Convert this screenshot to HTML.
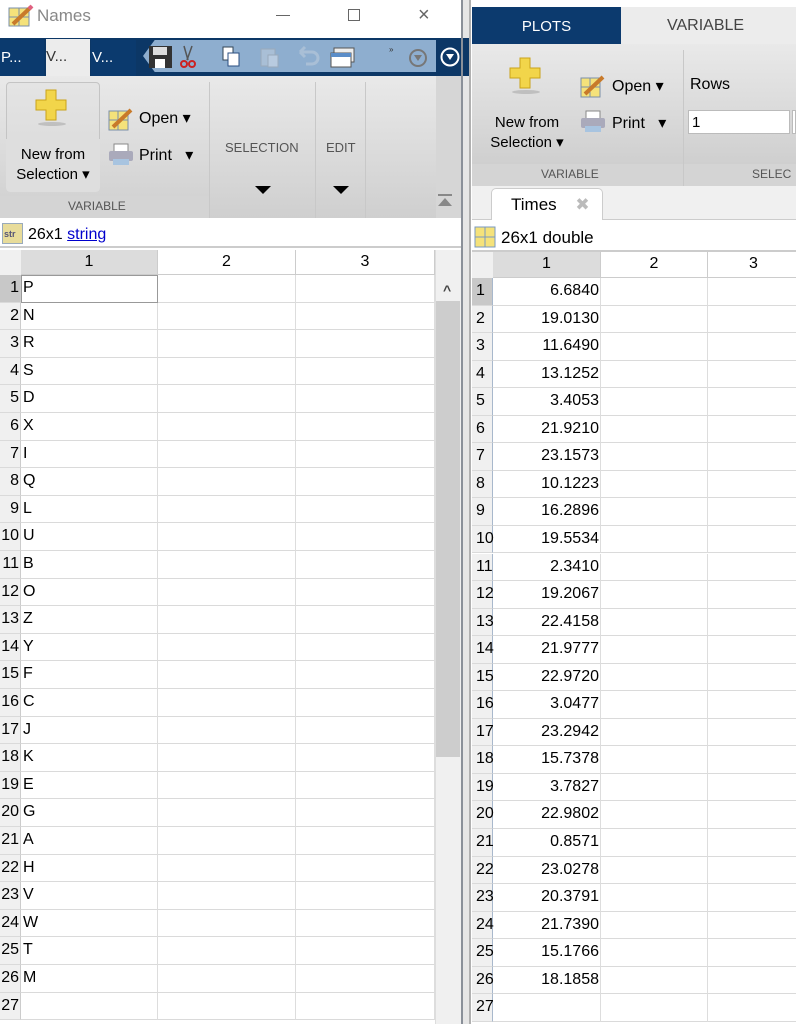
<!DOCTYPE html>
<html><head><meta charset="utf-8">
<style>
*{box-sizing:border-box;margin:0;padding:0}
body{width:796px;height:1024px;overflow:hidden;background:#fff;font-family:"Liberation Sans",sans-serif;position:relative;color:#000}
.abs{position:absolute}
.rib{background:linear-gradient(#e9e9e9,#cfcfcf)}
.lbl{font-size:12px;color:#555;position:absolute}
.gridcell{position:absolute;border-right:1px solid #ddd;border-bottom:1px solid #e3e3e3;font-size:16px}
</style></head><body>
<!-- LEFT WINDOW -->
<div class="abs" style="left:0;top:0;width:462px;height:38px;background:#fff"></div>
<svg class="abs" style="left:8px;top:4px" width="26" height="24"><rect x="1" y="4" width="20" height="18" fill="#f5e27a" stroke="#7a8fa8"/><line x1="11" y1="4" x2="11" y2="22" stroke="#7a8fa8"/><line x1="1" y1="13" x2="21" y2="13" stroke="#7a8fa8"/><line x1="5" y1="20" x2="23" y2="3" stroke="#c87a2a" stroke-width="4"/><line x1="21" y1="5" x2="24" y2="2" stroke="#e06080" stroke-width="4"/></svg>
<div class="abs" style="left:37px;top:6px;font-size:17px;color:#888">Names</div>
<div class="abs" style="left:276px;top:15px;width:14px;height:1px;background:#666"></div>
<div class="abs" style="left:348px;top:9px;width:12px;height:12px;border:1px solid #666"></div>
<div class="abs" style="left:418px;top:4px;font-size:20px;color:#666">×</div>
<div class="abs" style="left:0;top:38px;width:462px;height:38px;background:#0c3766"></div>
<div class="abs" style="left:0;top:40px;width:44px;height:36px;background:#0b3a6e;color:#fff;font-size:15px;padding:9px 0 0 1px">P...</div>
<div class="abs" style="left:46px;top:39px;width:44px;height:37px;background:#ececec;color:#333;font-size:15px;padding:9px 0 0 0px">V...</div>
<div class="abs" style="left:91px;top:40px;width:45px;height:36px;background:#0b3a6e;color:#fff;font-size:15px;padding:9px 0 0 1px">V...</div>
<div class="abs" style="left:143px;top:40px;width:293px;height:32px;background:#8eaecf;clip-path:polygon(4% 0,100% 0,100% 100%,4% 100%,0 50%)"></div>
<svg class="abs" style="left:148px;top:44px" width="290" height="26">
<rect x="1" y="2" width="23" height="22" fill="#333"/><rect x="5" y="3" width="14" height="8" fill="#ddd"/><rect x="7" y="15" width="10" height="9" fill="#fff"/>
<line x1="36" y1="2" x2="40" y2="16" stroke="#555" stroke-width="1.5"/><line x1="44" y1="2" x2="39" y2="16" stroke="#555" stroke-width="1.5"/><circle cx="36" cy="20" r="3" stroke="#c22" fill="none" stroke-width="2"/><circle cx="44" cy="20" r="3" stroke="#c22" fill="none" stroke-width="2"/>
<rect x="75" y="3" width="10" height="13" fill="#fff" stroke="#345"/><rect x="80" y="9" width="11" height="13" fill="#fff" stroke="#2a4e80"/>
<rect x="113" y="5" width="14" height="17" fill="#a9bfd6" stroke="#9ab"/><rect x="120" y="11" width="10" height="12" fill="#b8cbe0" stroke="#9ab"/>
<path d="M152 8 h12 a6 6 0 0 1 0 12 h-6 M152 8 l5 -5 M152 8 l5 5" stroke="#a9bfd6" stroke-width="3" fill="none"/>
<rect x="186" y="4" width="20" height="14" fill="#eee" stroke="#555"/><rect x="183" y="9" width="20" height="14" fill="#fff" stroke="#555"/><rect x="183" y="9" width="20" height="4" fill="#5b8dc8"/>
<text x="241" y="8" font-size="8" fill="#333">»</text>
<circle cx="270" cy="14" r="8" fill="none" stroke="#777" stroke-width="2"/><path d="M266 11 h8 l-4 6z" fill="#777"/>
</svg>
<svg class="abs" style="left:440px;top:45px" width="22" height="24"><circle cx="10" cy="12" r="8.5" fill="none" stroke="#fff" stroke-width="2"/><path d="M6 9 h8 l-4 6z" fill="#fff"/></svg>
<div class="abs rib" style="left:0;top:76px;width:436px;height:142px"></div>
<div class="abs" style="left:436px;top:76px;width:26px;height:142px;background:#d6d6d6"></div>
<div class="abs" style="left:6px;top:82px;width:94px;height:110px;border:1px solid #c4c4c4;border-radius:4px;background:linear-gradient(#e4e4e4,#d8d8d8)"></div>
<div class="abs" style="left:6px;top:139px;width:94px;height:53px;background:#dedede;border-radius:0 0 4px 4px"></div>
<svg class="abs" style="left:34px;top:88px" width="36" height="40"><path d="M12 2h10v10h10v10h-10v10h-10v-10h-10v-10h10z" fill="#f2d54a" stroke="#c9a21a"/><ellipse cx="18" cy="36" rx="14" ry="2" fill="#aaa" opacity=".6"/></svg>
<div class="abs" style="left:6px;top:145px;width:94px;text-align:center;font-size:15px;line-height:20px">New from<br>Selection ▾</div>
<div class="abs" style="left:0;top:196px;width:209px;height:22px;background:#d4d4d4"></div>
<div class="lbl" style="left:68px;top:199px">VARIABLE</div>
<svg class="abs" style="left:108px;top:106px" width="26" height="26"><rect x="1" y="5" width="19" height="19" fill="#f5e27a" stroke="#7a8fa8"/><line x1="10" y1="5" x2="10" y2="24" stroke="#7a8fa8"/><line x1="1" y1="14" x2="20" y2="14" stroke="#7a8fa8"/><line x1="5" y1="21" x2="23" y2="4" stroke="#c87a2a" stroke-width="4"/></svg>
<div class="abs" style="left:139px;top:108px;font-size:16px">Open ▾</div>
<svg class="abs" style="left:108px;top:143px" width="26" height="24"><rect x="6" y="1" width="14" height="8" fill="#fff" stroke="#888"/><rect x="1" y="8" width="24" height="10" rx="2" fill="#aab"/><rect x="5" y="16" width="16" height="6" fill="#a8c4e0"/></svg>
<div class="abs" style="left:139px;top:145px;font-size:16px">Print&nbsp;&nbsp;&nbsp;▾</div>
<div class="abs" style="left:209px;top:82px;width:1px;height:136px;background:#c8c8c8"></div>
<div class="abs" style="left:315px;top:82px;width:1px;height:136px;background:#c8c8c8"></div>
<div class="abs" style="left:365px;top:82px;width:1px;height:136px;background:#c8c8c8"></div>
<div class="lbl" style="left:225px;top:140px;font-size:13px">SELECTION</div>
<div class="lbl" style="left:326px;top:140px;font-size:13px">EDIT</div>
<div class="abs" style="left:255px;top:186px;border:8px solid transparent;border-top:8px solid #000"></div>
<div class="abs" style="left:333px;top:186px;border:8px solid transparent;border-top:8px solid #000"></div>
<div class="abs" style="left:438px;top:194px;width:14px;height:2px;background:#888"></div>
<div class="abs" style="left:438px;top:198px;border:7px solid transparent;border-bottom:8px solid #888;border-top:0"></div>
<div class="abs" style="left:0;top:218px;width:462px;height:30px;background:#fff;border-bottom:2px solid #ccc"></div>
<div class="abs" style="left:2px;top:223px;width:21px;height:21px;background:#e8dc9a;border:1px solid #9ab;font-size:9px;font-weight:bold;color:#557;padding:5px 0 0 1px">str</div>
<div class="abs" style="left:28px;top:226px;font-size:16px">26x1 <span style="color:#00c;text-decoration:underline">string</span></div>
<div id="L"></div>
<div class="abs" style="left:435px;top:250px;width:26px;height:774px;background:#f0f0f0;border-left:1px solid #ddd"></div>
<div class="abs" style="left:443px;top:282px;font-size:14px;color:#444;font-weight:bold">^</div>
<div class="abs" style="left:436px;top:301px;width:24px;height:456px;background:#cdcdcd"></div>
<div class="abs" style="left:461px;top:0;width:2px;height:1024px;background:#8a9099"></div>
<div class="abs" style="left:463px;top:0;width:8px;height:1024px;background:#e6e6e6"></div>
<div class="abs" style="left:469px;top:0;width:2px;height:1024px;background:#b0b0b0"></div>
<div class="abs" style="left:463px;top:38px;width:6px;height:38px;background:#0c3766"></div>
<!-- RIGHT -->
<div class="abs" style="left:471px;top:0;width:325px;height:44px;background:#fff"></div>
<div class="abs" style="left:472px;top:7px;width:149px;height:37px;background:#0c3a6e;color:#fff;font-size:15px;text-align:center;padding-top:11px">PLOTS</div>
<div class="abs" style="left:621px;top:7px;width:175px;height:37px;background:#ececec;color:#444;font-size:16px;padding:10px 0 0 46px">VARIABLE</div>
<div class="abs rib" style="left:472px;top:44px;width:324px;height:120px"></div>
<div class="abs" style="left:472px;top:164px;width:324px;height:22px;background:#d4d4d4"></div>
<div class="lbl" style="left:541px;top:167px">VARIABLE</div>
<div class="lbl" style="left:752px;top:167px">SELEC</div>
<div class="abs" style="left:683px;top:50px;width:1px;height:136px;background:#c8c8c8"></div>
<svg class="abs" style="left:508px;top:56px" width="36" height="40"><path d="M12 2h10v10h10v10h-10v10h-10v-10h-10v-10h10z" fill="#f2d54a" stroke="#c9a21a"/><ellipse cx="18" cy="36" rx="14" ry="2" fill="#aaa" opacity=".6"/></svg>
<div class="abs" style="left:477px;top:113px;width:100px;text-align:center;font-size:15px;line-height:20px">New from<br>Selection ▾</div>
<svg class="abs" style="left:580px;top:73px" width="26" height="26"><rect x="1" y="5" width="19" height="19" fill="#f5e27a" stroke="#7a8fa8"/><line x1="10" y1="5" x2="10" y2="24" stroke="#7a8fa8"/><line x1="1" y1="14" x2="20" y2="14" stroke="#7a8fa8"/><line x1="5" y1="21" x2="23" y2="4" stroke="#c87a2a" stroke-width="4"/></svg>
<div class="abs" style="left:612px;top:76px;font-size:16px">Open ▾</div>
<svg class="abs" style="left:580px;top:110px" width="26" height="24"><rect x="6" y="1" width="14" height="8" fill="#fff" stroke="#888"/><rect x="1" y="8" width="24" height="10" rx="2" fill="#aab"/><rect x="5" y="16" width="16" height="6" fill="#a8c4e0"/></svg>
<div class="abs" style="left:612px;top:113px;font-size:16px">Print&nbsp;&nbsp;&nbsp;▾</div>
<div class="abs" style="left:690px;top:76px;font-size:16px">Rows</div>
<div class="abs" style="left:688px;top:110px;width:102px;height:24px;background:#fff;border:1px solid #bbb;font-size:15px;padding:3px 0 0 3px">1</div>
<div class="abs" style="left:792px;top:110px;width:4px;height:24px;background:#fff;border:1px solid #bbb"></div>
<div class="abs" style="left:472px;top:186px;width:324px;height:34px;background:#f0f0f0;border-bottom:1px solid #ccc"></div>
<div class="abs" style="left:491px;top:188px;width:112px;height:33px;background:#fff;border:1px solid #ccc;border-bottom:none;border-radius:5px 5px 0 0;font-size:17px;padding:6px 0 0 19px">Times <span style="color:#bbb;margin-left:14px">✖</span></div>
<div class="abs" style="left:472px;top:220px;width:324px;height:32px;background:#fff;border-bottom:2px solid #ccc"></div>
<svg class="abs" style="left:474px;top:226px" width="22" height="22"><rect x="1" y="1" width="20" height="20" fill="#f5e27a" stroke="#7a9ac0"/><line x1="11" y1="1" x2="11" y2="21" stroke="#7a9ac0"/><line x1="1" y1="11" x2="21" y2="11" stroke="#7a9ac0"/></svg>
<div class="abs" style="left:501px;top:228px;font-size:17px">26x1 double</div>
<div id="R"></div>
<script>
var names="PNRSDXIQLUBOZYFCJKEGAHVWTM".split("");
var vals=["6.6840","19.0130","11.6490","13.1252","3.4053","21.9210","23.1573","10.1223","16.2896","19.5534","2.3410","19.2067","22.4158","21.9777","22.9720","3.0477","23.2942","15.7378","3.7827","22.9802","0.8571","23.0278","20.3791","21.7390","15.1766","18.1858"];
function grid(id,x0,top,cols,rh,hh,nums,right){
 var h='';
 h+='<div class="abs" style="left:'+x0+'px;top:'+top+'px;width:'+(cols[cols.length-1]-x0)+'px;height:'+hh+'px;background:#fff;border-bottom:1px solid #ccc"></div>';
 for(var c=0;c<cols.length-1;c++){
  h+='<div class="gridcell" style="left:'+cols[c]+'px;top:'+top+'px;width:'+(cols[c+1]-cols[c])+'px;height:'+hh+'px;text-align:center;padding-top:3px;border-right:1px solid #ccc;border-bottom:1px solid #ccc;background:'+(c==0?'#dcdcdc':'#fff')+'">'+(c+1)+'</div>';
 }
 h+='<div class="abs" style="left:'+x0+'px;top:'+top+'px;width:'+(cols[0]-x0)+'px;height:'+hh+'px;background:#f0f0f0"></div>';
 for(var r=0;r<27;r++){
  var y=top+hh+r*rh;
  var bb='#dadada';
  h+='<div class="gridcell" style="left:'+x0+'px;top:'+y+'px;width:'+(cols[0]-x0)+'px;height:'+rh+'px;background:'+(r==0?'#c8c8c8':'#f0f0f0')+';border-right:1px solid '+(right?'#a8b8cc':'#ccc')+';border-bottom:1px solid '+bb+';text-align:'+(right?'left':'right')+';padding:4px 1px 0 '+(right?4:0)+'px;font-size:16px">'+(r+1)+'</div>';
  for(var c=0;c<cols.length-1;c++){
   var t='';if(c==0&&r<26)t=nums[r];
   var sel=(r==0&&c==0&&!right)?';outline:1px solid #999;outline-offset:-1px':'';
   h+='<div class="gridcell" style="left:'+cols[c]+'px;top:'+y+'px;width:'+(cols[c+1]-cols[c])+'px;height:'+rh+'px;border-bottom:1px solid '+bb+';text-align:'+(right?'right':'left')+';padding:4px '+(right?'1px':'0')+' 0 '+(right?0:2)+'px'+sel+'">'+t+'</div>';
  }
 }
 document.getElementById(id).innerHTML=h;
}
grid('L',0,250,[21,158,296,435],27.6,25,names,false);
grid('R',472,252,[493,601,708,800],27.55,26,vals,true);
</script>
</body></html>
